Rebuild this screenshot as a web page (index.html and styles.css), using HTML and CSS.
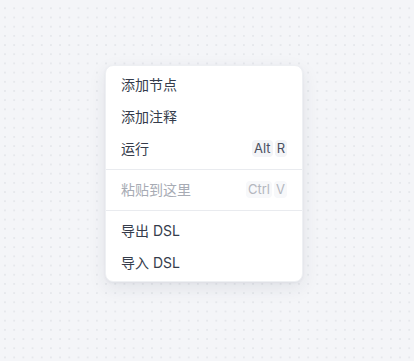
FILE: index.html
```html
<!DOCTYPE html>
<html lang="zh">
<head>
<meta charset="utf-8">
<title>Context menu</title>
<link rel="stylesheet" href="styles.css">
</head>
<body>
<div class="canvas">
  <div class="menu">
    <div class="item"><span class="label">添加节点</span></div>
    <div class="item"><span class="label">添加注释</span></div>
    <div class="item"><span class="label">运行</span><span class="keys"><kbd class="key">Alt</kbd><kbd class="key">R</kbd></span></div>
    <div class="divider"></div>
    <div class="item disabled"><span class="label">粘贴到这里</span><span class="keys"><kbd class="key">Ctrl</kbd><kbd class="key">V</kbd></span></div>
    <div class="divider"></div>
    <div class="item"><span class="label">导出 DSL</span></div>
    <div class="item"><span class="label">导入 DSL</span></div>
  </div>
</div>
</body>
</html>
```
FILE: styles.css
```css
html, body {
  margin: 0;
  padding: 0;
  height: 100%;
}
body {
  background-color: #f4f5f8;
  background-image: radial-gradient(circle, #e6e8ec 0.9px, transparent 1.2px);
  background-size: 9.2px 9.2px;
  background-position: 0.4px 3.7px;
  font-family: "Inter", "Noto Sans CJK SC", sans-serif;
}
.canvas {
  padding: 65px 0 0 105px;
}
.menu {
  width: 198px;
  box-sizing: border-box;
  background: #ffffff;
  border-radius: 8px;
  border: 1px solid #eef0f3;
  box-shadow: 0 6px 18px rgba(30, 40, 70, 0.09), 0 1px 3px rgba(30, 40, 70, 0.05);
  padding: 2px 0 3px;
  display: flex;
  flex-direction: column;
}
.item {
  height: 32px;
  display: flex;
  align-items: center;
  justify-content: space-between;
  padding: 0 15px;
  font-size: 14px;
  color: #353c4b;
}
.item.disabled {
  color: #a7abb4;
}
.keys {
  display: flex;
  gap: 2px;
}
.key {
  font-family: "Inter", "Noto Sans", sans-serif;
  font-size: 13px;
  line-height: 17px;
  height: 17px;
  padding: 0 2px;
  border-radius: 4px;
  background: #f3f4f7;
  color: #4a5060;
}
.disabled .key {
  color: #b3b6be;
  background: #f7f8fa;
}
.divider {
  height: 1px;
  background: #e9ebef;
  margin: 5px 0 3px;
}
```
